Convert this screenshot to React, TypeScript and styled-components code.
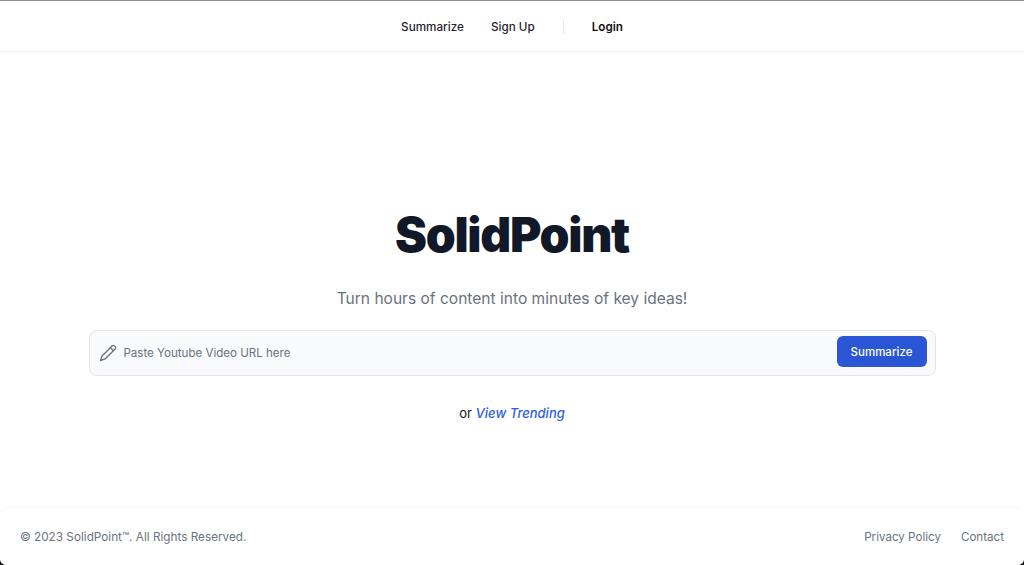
import styled, { createGlobalStyle } from "styled-components";

const GlobalStyle = createGlobalStyle`
    html, body {
        margin: 0;
        padding: 0;
        background: #ffffff;
        font-family: Inter, "Liberation Sans", sans-serif;
    }
    * {
        box-sizing: border-box;
    }
`;

const Page = styled.div`
    position: relative;
    width: 1024px;
    height: 565px;
    display: flex;
    flex-direction: column;
    overflow: hidden;
    border-top: 1px solid #8c8c8c;
    background: #fff;
`;

const Header = styled.header`
    height: 51px;
    flex: none;
    display: flex;
    align-items: center;
    justify-content: center;
    padding-top: 1px;
    border-bottom: 1px solid #f1f2f4;
`;

const NavLink = styled.a<{ $bold?: boolean; $gap?: number }>`
    font-size: 11.7px;
    line-height: 16px;
    font-weight: ${(p) => (p.$bold ? 600 : 500)};
    color: ${(p) => (p.$bold ? "#111111" : "#1f2430")};
    margin-right: ${(p) => p.$gap ?? 0}px;
`;

const Divider = styled.span`
    width: 1px;
    height: 14px;
    background: #e5e7eb;
    margin-right: 28px;
`;

const Main = styled.main`
    flex: 1;
    display: flex;
    flex-direction: column;
    align-items: center;
    padding-top: 151px;
`;

const Title = styled.h1`
    margin: 0;
    font-size: 48px;
    line-height: 64px;
    font-weight: 880;
    letter-spacing: -1.3px;
    color: #111827;
`;

const Tagline = styled.p`
    margin: 20px 0 0;
    font-size: 15.55px;
    line-height: 24px;
    font-weight: 400;
    color: #6b7280;
`;

const SearchBar = styled.div`
    margin-top: 19px;
    width: 847px;
    height: 46px;
    display: flex;
    align-items: center;
    padding: 0 8px 0 8px;
    background: #f9fafb;
    border: 1px solid #e3e5e9;
    border-radius: 8px;
`;

const PencilIcon = styled.svg`
    width: 20px;
    height: 20px;
    flex: none;
    color: #6b7280;
`;

const UrlInput = styled.input`
    flex: 1;
    min-width: 0;
    margin-left: 6px;
    border: 0;
    outline: 0;
    padding: 0;
    background: transparent;
    font: 400 11.55px Inter, "Liberation Sans", sans-serif;
    color: #111827;
    &::placeholder {
        color: #6b7280;
        opacity: 1;
    }
`;

const SubmitButton = styled.button`
    width: 90px;
    height: 31px;
    margin-bottom: 3px;
    border: 0;
    border-radius: 6px;
    background: #2a56d6;
    color: #fff;
    font: 500 11.5px Inter, "Liberation Sans", sans-serif;
    padding: 0;
`;

const TrendingRow = styled.p`
    margin: 28px 0 0;
    font-size: 13px;
    line-height: 18px;
    color: #111;
`;

const TrendingLink = styled.a`
    color: #2d5fe3;
    font-style: italic;
    font-weight: 500;
`;

const Footer = styled.footer`
    height: 58px;
    flex: none;
    display: flex;
    align-items: center;
    justify-content: space-between;
    padding: 0 20px;
    border-top: 1px solid #f7f7f8;
    border-radius: 10px 10px 0 0;
    font-size: 11.75px;
    color: #6b7280;
`;

const FooterLinks = styled.div`
    display: flex;
    gap: 20px;
    font-size: 11.6px;
`;

const Corner = styled.span<{ $right?: boolean }>`
    position: absolute;
    bottom: 0;
    ${(p) => (p.$right ? "right: 0;" : "left: 0;")}
    width: 6px;
    height: 6px;
    background: radial-gradient(
        circle at ${(p) => (p.$right ? "0 0" : "100% 0")},
        transparent 5.5px,
        #111 6.5px
    );
`;

export default function App() {
    return (
        <>
            <GlobalStyle />
            <Page>
                <Header>
                    <NavLink $gap={27}>Summarize</NavLink>
                    <NavLink $gap={28}>Sign Up</NavLink>
                    <Divider />
                    <NavLink $bold>Login</NavLink>
                </Header>
                <Main>
                    <Title>SolidPoint</Title>
                    <Tagline>Turn hours of content into minutes of key ideas!</Tagline>
                    <SearchBar>
                        <PencilIcon viewBox="0 0 24 24" fill="none" stroke="currentColor" strokeWidth="1.6" strokeLinecap="round" strokeLinejoin="round">
                            <path d="M16.86 3.49a2.1 2.1 0 0 1 2.97 0l.68.68a2.1 2.1 0 0 1 0 2.97L8.5 19.15 3 21l1.85-5.5L16.86 3.49z" />
                            <path d="M14.8 5.55l3.65 3.65" />
                        </PencilIcon>
                        <UrlInput placeholder="Paste Youtube Video URL here" />
                        <SubmitButton>Summarize</SubmitButton>
                    </SearchBar>
                    <TrendingRow>
                        or <TrendingLink>View Trending</TrendingLink>
                    </TrendingRow>
                </Main>
                <Footer>
                    <span>© 2023 SolidPoint™. All Rights Reserved.</span>
                    <FooterLinks>
                        <span>Privacy Policy</span>
                        <span>Contact</span>
                    </FooterLinks>
                </Footer>
                <Corner />
                <Corner $right />
            </Page>
        </>
    );
}
